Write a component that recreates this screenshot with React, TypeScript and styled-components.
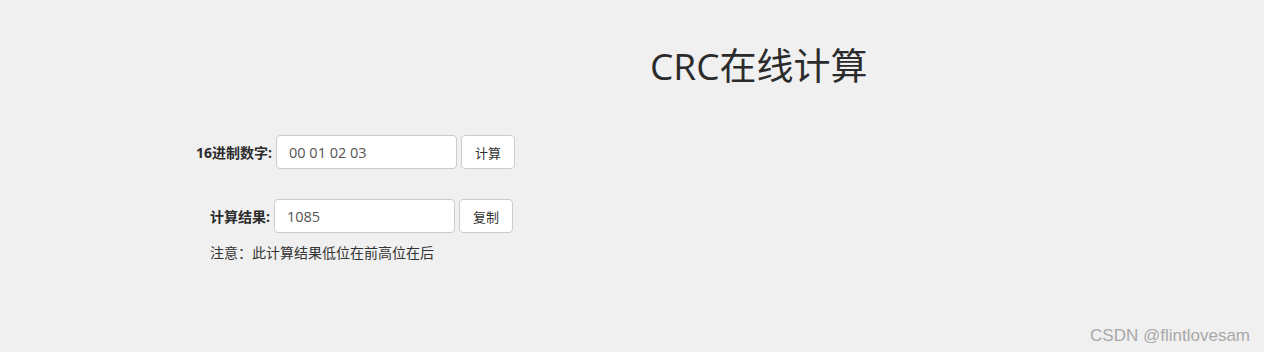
import styled, { createGlobalStyle } from 'styled-components'
import { useState } from 'react'

const GlobalStyle = createGlobalStyle`
  html, body {
    margin: 0;
    padding: 0;
    background: #f0f0f0;
  }
  body {
    font-family: 'Open Sans', 'Noto Sans CJK SC', sans-serif;
    color: #333;
  }
`

const Page = styled.div`
  position: relative;
  height: 352px;
  overflow: hidden;
  padding-top: 38px;
  box-sizing: border-box;
`

const Title = styled.h1`
  margin: 0 0 0 650px;
  font-family: 'Open Sans', 'Noto Sans CJK SC', sans-serif;
  font-weight: 400;
  font-size: 37px;
  line-height: 56px;
  color: #2b2b2b;
  white-space: nowrap;
`

const Form = styled.div`
  display: flex;
  flex-direction: column;
  margin-top: 41px;
`

const Row = styled.div<{ $indent: number }>`
  display: flex;
  align-items: center;
  gap: 4px;
  margin-left: ${p => p.$indent}px;
  margin-bottom: 30px;
`

const Label = styled.label`
  width: 92px;
  text-align: right;
  font-size: 14px;
  font-weight: 700;
  color: #2b2b2b;
  white-space: nowrap;
`

const Input = styled.input`
  width: 181px;
  height: 34px;
  box-sizing: border-box;
  padding: 0 12px;
  border: 1px solid #ccc;
  border-radius: 4px;
  background: #fff;
  font-family: 'Open Sans', 'Noto Sans CJK SC', sans-serif;
  font-size: 14.5px;
  color: #555;
  outline: none;
`

const Button = styled.button`
  width: 54px;
  height: 34px;
  box-sizing: border-box;
  border: 1px solid #ccc;
  border-radius: 4px;
  background: #fff;
  font-family: 'Open Sans', 'Noto Sans CJK SC', sans-serif;
  font-size: 13px;
  color: #333;
  cursor: pointer;
`

const Note = styled.div`
  margin: -21px 0 0 210px;
  font-size: 14px;
  color: #333;
`

const Watermark = styled.div`
  position: absolute;
  right: 14px;
  bottom: 6px;
  font-family: 'Liberation Sans', Arial, sans-serif;
  font-size: 17px;
  color: #a8a8a8;
`

export default function App() {
  const [hex, setHex] = useState('00 01 02 03')
  const [result] = useState('1085')

  return (
    <>
      <GlobalStyle />
      <Page>
        <Title>CRC在线计算</Title>
        <Form>
          <Row $indent={180}>
            <Label>16进制数字:</Label>
            <Input value={hex} onChange={e => setHex(e.target.value)} />
            <Button>计算</Button>
          </Row>
          <Row $indent={178}>
            <Label>计算结果:</Label>
            <Input value={result} readOnly />
            <Button>复制</Button>
          </Row>
          <Note>注意：此计算结果低位在前高位在后</Note>
        </Form>
        <Watermark>CSDN @flintlovesam</Watermark>
      </Page>
    </>
  )
}
